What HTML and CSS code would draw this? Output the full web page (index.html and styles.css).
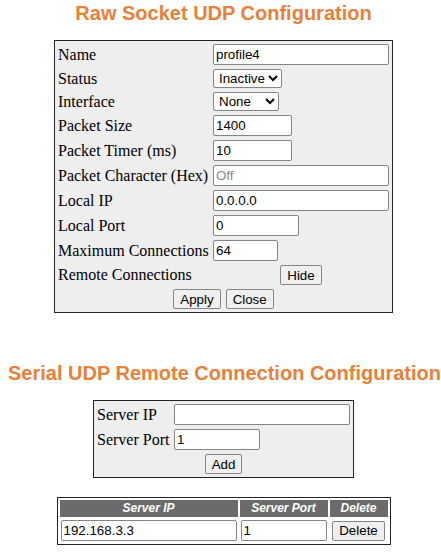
FILE: index.html
```html
<!DOCTYPE html>
<html lang="en">
<head>
<meta charset="utf-8">
<title>Raw Socket UDP Configuration</title>
<link rel="stylesheet" href="styles.css">
</head>
<body>
<div class="page">
  <h2 class="title">Raw Socket UDP Configuration</h2>

  <div class="form-box form-main">
    <label class="label">Name</label>
    <input class="field w-long" type="text" value="profile4">

    <label class="label">Status</label>
    <select class="field select w-status"><option>Inactive</option></select>

    <label class="label">Interface</label>
    <select class="field select w-iface"><option>None</option></select>

    <label class="label">Packet Size</label>
    <input class="field w-size" type="text" value="1400">

    <label class="label">Packet Timer (ms)</label>
    <input class="field w-size" type="text" value="10">

    <label class="label">Packet Character (Hex)</label>
    <input class="field w-long" type="text" placeholder="Off">

    <label class="label">Local IP</label>
    <input class="field w-long" type="text" value="0.0.0.0">

    <label class="label">Local Port</label>
    <input class="field w-port" type="text" value="0">

    <label class="label">Maximum Connections</label>
    <input class="field w-max" type="text" value="64">

    <span class="label">Remote Connections</span>
    <button class="btn centered" type="button">Hide</button>

    <div class="actions">
      <button class="btn" type="button">Apply</button>
      <button class="btn" type="button">Close</button>
    </div>
  </div>

  <h2 class="title title-second">Serial UDP Remote Connection Configuration</h2>

  <div class="form-box form-remote">
    <label class="label">Server IP</label>
    <input class="field w-long" type="text" value="">

    <label class="label">Server Port</label>
    <input class="field w-port" type="text" value="1">

    <div class="actions">
      <button class="btn" type="button">Add</button>
    </div>
  </div>

  <table class="list">
    <thead>
      <tr>
        <th class="col-ip">Server IP</th>
        <th class="col-port">Server Port</th>
        <th class="col-del">Delete</th>
      </tr>
    </thead>
    <tbody>
      <tr>
        <td class="col-ip"><input class="field w-long" type="text" value="192.168.3.3"></td>
        <td class="col-port"><input class="field w-port" type="text" value="1"></td>
        <td class="col-del"><button class="btn" type="button">Delete</button></td>
      </tr>
    </tbody>
  </table>
</div>
</body>
</html>
```

FILE: styles.css
```css
body {
  margin: 0;
  background: #ffffff;
}

.page {
  width: 431px;
  margin-left: 8px;
  padding-top: 2px;
}

.title {
  margin: 0;
  font: bold 20px/23px "Liberation Sans", Arial, sans-serif;
  color: #e8803a;
  text-align: center;
  white-space: nowrap;
}

.title-second {
  margin-top: 49px;
}

.form-box {
  display: grid;
  width: max-content;
  margin: 15px auto 0;
  padding: 3px;
  row-gap: 4px;
  column-gap: 4px;
  align-items: center;
  border: 1px solid #222222;
  background: #eeeeee;
}

.form-main {
  grid-template-columns: 151px 176px;
}

.form-remote {
  grid-template-columns: 73px 176px;
}

.label {
  font: 16px/18px "Liberation Serif", "Times New Roman", serif;
  color: #000000;
  white-space: nowrap;
}

.field {
  box-sizing: border-box;
  height: 21px;
  margin: 0;
  padding: 1px 2px;
  font: 13.33px "Liberation Sans", Arial, sans-serif;
  color: #000000;
  background: #ffffff;
  border: 1px solid #858585;
  border-radius: 2px;
}

.field::placeholder {
  color: #8a8a8a;
}

.select {
  height: 19px;
  padding: 0 0 0 1px;
}

.w-long { width: 176px; }
.w-status { width: 69px; }
.w-iface { width: 66px; }
.w-size { width: 79px; }
.w-port { width: 86px; }
.w-max { width: 65px; }

.btn {
  box-sizing: border-box;
  height: 20px;
  margin: 0;
  padding: 0 6px;
  font: 13.33px "Liberation Sans", Arial, sans-serif;
  color: #000000;
  background: #efefef;
  border: 1px solid #858585;
  border-radius: 2px;
}

.centered {
  justify-self: center;
}

.actions {
  grid-column: 1 / -1;
  display: flex;
  justify-content: center;
  gap: 5px;
}

.list {
  margin: 19px auto 0;
  border: 1px solid #222222;
  border-spacing: 2px;
  background: #ffffff;
}

.list th {
  padding: 1px;
  font: italic bold 12px/15px "Liberation Sans", Arial, sans-serif;
  color: #ffffff;
  background: #6b6b6b;
  text-align: center;
}

.list td {
  padding: 1px;
  vertical-align: middle;
}

.list .col-ip { width: 176px; }
.list .col-port { width: 86px; }
.list .col-del { width: 56px; text-align: center; }

.list .field {
  display: block;
}
```
